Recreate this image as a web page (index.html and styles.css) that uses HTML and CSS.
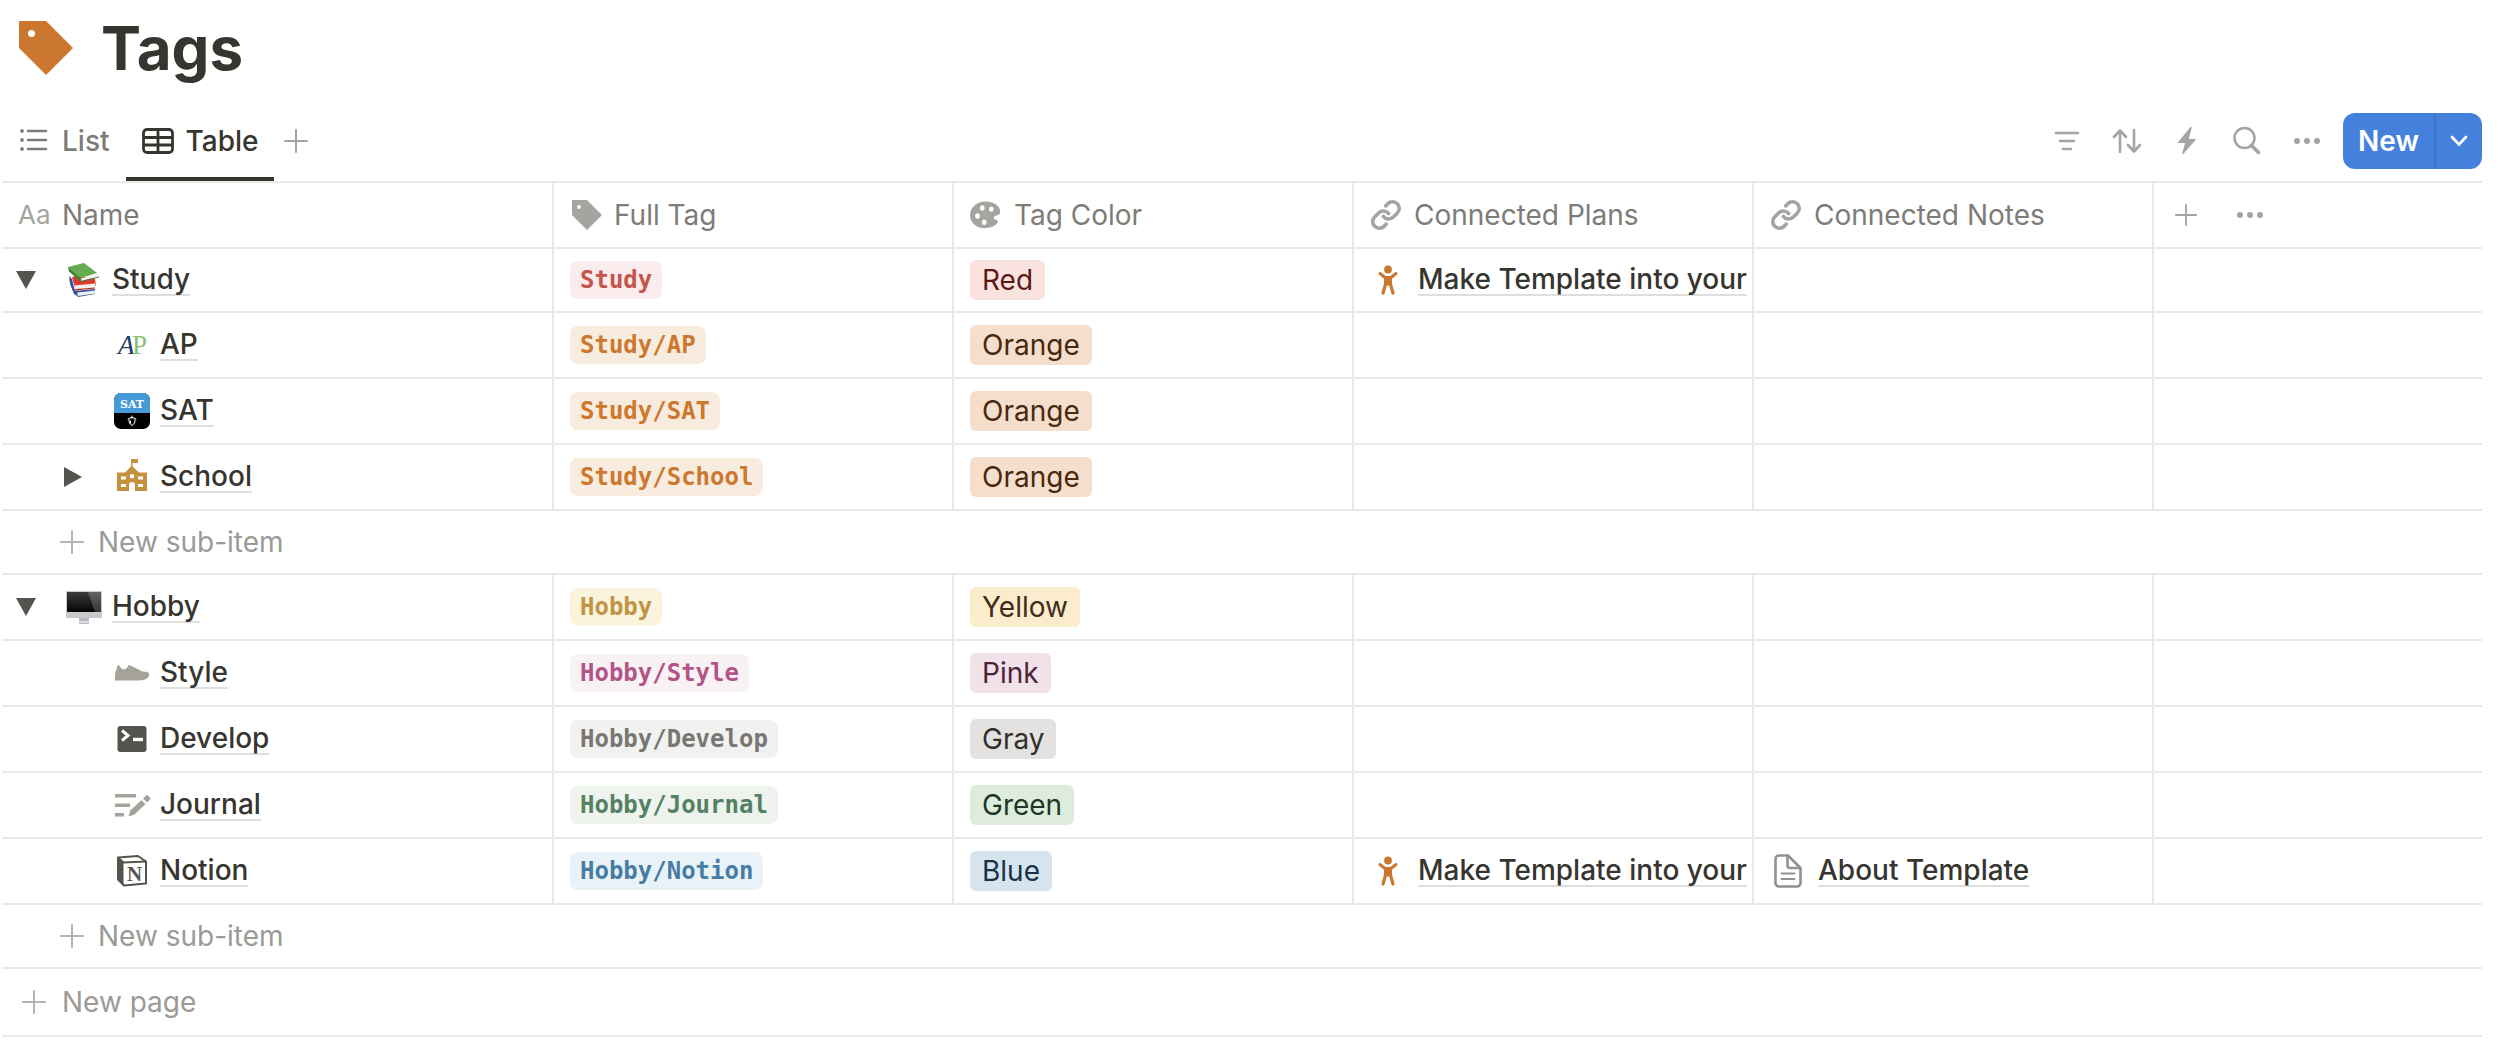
FILE: index.html
```html
<!DOCTYPE html>
<html lang="en">
<head>
  <meta charset="UTF-8" />
  <meta name="viewport" content="width=device-width, initial-scale=1" />
  <title>Tags</title>
  <link rel="stylesheet" href="styles.css">
</head>
<body>

<!-- Shared icons -->
<svg class="sprite" aria-hidden="true">
  <symbol id="i-tag" viewBox="0 0 54 54">
    <path fill-rule="evenodd" d="M0 0h27l27 27-27 27L0 27zM12.500 9a3.500 3.500 0 1 0 0 7 3.500 3.500 0 0 0 0-7z" />
  </symbol>
  <symbol id="i-plus" viewBox="0 0 24 24">
    <path d="M12 1v22M1 12h22" fill="none" stroke="currentColor" stroke-width="2" stroke-linecap="round" />
  </symbol>
  <symbol id="i-dots" viewBox="0 0 26 8">
    <circle cx="3" cy="4" r="3" /><circle cx="13" cy="4" r="3" /><circle cx="23" cy="4" r="3" />
  </symbol>
  <symbol id="i-link" viewBox="0 0 24 24">
    <g fill="none" stroke="currentColor" stroke-width="2.700" stroke-linecap="round" stroke-linejoin="round">
      <path d="M10 13a5 5 0 0 0 7.540.540l3-3a5 5 0 0 0-7.070-7.070l-1.720 1.710" />
      <path d="M14 11a5 5 0 0 0-7.540-.540l-3 3a5 5 0 0 0 7.070 7.070l1.710-1.710" />
    </g>
  </symbol>
  <symbol id="i-person" viewBox="0 0 20 30">
    <circle cx="10" cy="4.500" r="3.900" />
    <path d="M2 8.500l5 4h6l5-4" fill="none" stroke="currentColor" stroke-width="3" stroke-linecap="round" stroke-linejoin="round" />
    <path d="M6 11.500h8v9H6z" />
    <path d="M7.500 19L5 28M12.500 19l2.500 9" fill="none" stroke="currentColor" stroke-width="3.200" stroke-linecap="round" />
  </symbol>
  <symbol id="i-down" viewBox="0 0 20 18"><path d="M0 0h20L10 18z" /></symbol>
  <symbol id="i-right" viewBox="0 0 18 20"><path d="M0 0v20l18-10z" /></symbol>
</svg>

<main class="page">
  <header class="page-header">
    <svg class="page-icon"><use href="#i-tag" /></svg>
    <h1>Tags</h1>
  </header>

  <div class="view-bar">
    <div class="tabs">
      <button class="tab">
        <svg class="icon" viewBox="0 0 32 32">
          <path d="M10 6h18M10 15h18M10 24h18" fill="none" stroke="currentColor" stroke-width="2.600" stroke-linecap="round" />
          <circle cx="4" cy="6" r="1.900" /><circle cx="4" cy="15" r="1.900" /><circle cx="4" cy="24" r="1.900" />
        </svg>
        List
      </button>
      <button class="tab active">
        <svg class="icon" viewBox="0 0 32 32">
          <path d="M5 4.500h22a3.500 3.500 0 0 1 3.500 3.500v16a3.500 3.500 0 0 1-3.500 3.500H5A3.500 3.500 0 0 1 1.500 24V8A3.500 3.500 0 0 1 5 4.500zM1.500 12.500h29M1.500 20h29M16 5v22" fill="none" stroke="currentColor" stroke-width="2.800" />
        </svg>
        Table
      </button>
      <button class="add-view" aria-label="Add view"><svg class="plus"><use href="#i-plus" /></svg></button>
    </div>

    <div class="tools">
      <button class="tool" aria-label="Filter">
        <svg class="icon" viewBox="0 0 32 32">
          <path d="M5 8h22M9 16h14M12 24h8" fill="none" stroke="currentColor" stroke-width="2.600" stroke-linecap="round" />
        </svg>
      </button>
      <button class="tool" aria-label="Sort">
        <svg class="icon" viewBox="0 0 32 32">
          <path d="M9 27V6M3 12l6-6.500 6 6.500M23 5v21M17 20l6 6.500 6-6.500" fill="none" stroke="currentColor" stroke-width="2.600" stroke-linecap="round" stroke-linejoin="round" />
        </svg>
      </button>
      <button class="tool" aria-label="Automations">
        <svg class="icon" viewBox="0 0 32 32">
          <path d="M19.500 2L7 17.200q-.500.800.500.800h6.500l-2.800 10.800q-.100 1.200.900.400L24.700 14.800q.600-.800-.400-.800h-6.500l2.900-11.300q0-1.500-1.200-.700z" />
        </svg>
      </button>
      <button class="tool" aria-label="Search">
        <svg class="icon" viewBox="0 0 32 32">
          <circle cx="13.500" cy="13" r="10" fill="none" stroke="currentColor" stroke-width="2.600" />
          <path d="M20.500 20.500l7 7" fill="none" stroke="currentColor" stroke-width="3.600" stroke-linecap="round" />
        </svg>
      </button>
      <button class="tool" aria-label="More"><svg class="dots"><use href="#i-dots" /></svg></button>
      <div class="new-group">
        <button class="new-btn">New</button>
        <button class="new-menu" aria-label="New from template">
          <svg class="chevron" viewBox="0 0 18 12">
            <path d="M2 2l7 7.500L16 2" fill="none" stroke="currentColor" stroke-width="2.600" stroke-linecap="round" />
          </svg>
        </button>
      </div>
    </div>
  </div>

  <table class="db">
    <colgroup>
      <col class="col-name">
      <col class="col-prop">
      <col class="col-prop">
      <col class="col-prop">
      <col class="col-prop">
      <col>
    </colgroup>
    <thead>
      <tr>
        <th><div class="head"><span class="aa">Aa</span>Name</div></th>
        <th><div class="head"><svg class="icon small"><use href="#i-tag" /></svg>Full Tag</div></th>
        <th>
          <div class="head">
            <svg class="icon" viewBox="0 0 32 32">
              <path fill-rule="evenodd" d="M15.500 2.500C7 2.500 0 8.500 0 16.200c0 7.300 6.300 13 14.500 13 5.500 0 9-1.500 12.300-4.400 1.700-1.600 1-3.600-.8-4-2.800-.600-3.200-3.600-.200-4.100 3-.400 4.400-1.300 4.400-4.200C30.200 7 24 2.500 15.500 2.500zM12.300 6.300a2.300 2.700 0 1 1 0 5.400 2.300 2.700 0 0 1 0-5.400zM21.300 7.400a2.300 2.700 0 1 1 0 5.400 2.300 2.700 0 0 1 0-5.400zM7.500 14.300a2.300 2.700 0 1 1 0 5.400 2.300 2.700 0 0 1 0-5.400zM14.200 20.500a2.300 2.700 0 1 1 0 5.400 2.300 2.700 0 0 1 0-5.400z" />
            </svg>
            Tag Color
          </div>
        </th>
        <th><div class="head"><svg class="icon"><use href="#i-link" /></svg>Connected Plans</div></th>
        <th><div class="head"><svg class="icon"><use href="#i-link" /></svg>Connected Notes</div></th>
        <th class="head-actions">
          <div class="head-buttons">
            <button aria-label="Add property"><svg class="plus"><use href="#i-plus" /></svg></button>
            <button aria-label="Property options"><svg class="dots"><use href="#i-dots" /></svg></button>
          </div>
        </th>
      </tr>
    </thead>

    <tbody>
      <tr class="first">
        <td>
          <div class="name">
            <button class="toggle" aria-label="Collapse Study"><svg class="arrow"><use href="#i-down" /></svg></button>
            <svg class="page-ico" viewBox="0 0 36 36">
              <path d="M3 14l3 3 3 12 2 5-3-2-4-10z" fill="#33529f" />
              <path d="M8 29l21-2v5l-17 3z" fill="#2d4a9c" />
              <path d="M11 30.500l18-2 1 3-18 2.500z" fill="#eceef2" />
              <path d="M6 15l4-1 19 3 1 7-21 2z" fill="#dc3a2c" />
              <path d="M8 23.500l21-2 1 4-20 2z" fill="#f3f1f1" />
              <path d="M8 27.300l21-1.700v1l-20 2z" fill="#b9281f" />
              <path d="M2 5L18 1l13 10-16 5z" fill="#67ab50" />
              <path d="M2 5l13 11v4L3 9.500z" fill="#3f7f36" />
              <path d="M15 16.500l17-4.500v2.500L15.500 19z" fill="#f4f4f2" />
              <path d="M15 19l18-4.500v1L15.500 20z" fill="#3f7f36" />
            </svg>
            <a href="#">Study</a>
          </div>
        </td>
        <td><code class="code red">Study</code></td>
        <td><span class="pill pill-red">Red</span></td>
        <td><div class="rel"><svg class="page-ico person"><use href="#i-person" /></svg><a href="#">Make Template into your</a></div></td>
        <td></td>
        <td></td>
      </tr>
      <tr>
        <td>
          <div class="name child">
            <span class="toggle"></span>
            <svg class="page-ico" viewBox="0 0 36 36">
              <text class="ap-a" x="4" y="27">A</text>
              <text class="ap-p" x="18" y="27">P</text>
            </svg>
            <a href="#">AP</a>
          </div>
        </td>
        <td><code class="code orange">Study/AP</code></td>
        <td><span class="pill pill-orange">Orange</span></td>
        <td></td>
        <td></td>
        <td></td>
      </tr>
      <tr>
        <td>
          <div class="name child">
            <span class="toggle"></span>
            <svg class="page-ico" viewBox="0 0 36 36">
              <rect width="36" height="36" rx="7" fill="#000" />
              <path d="M0 20V7a7 7 0 0 1 7-7h22a7 7 0 0 1 7 7v13z" fill="#459ad8" />
              <text class="sat" x="18" y="15">SAT</text>
              <path d="M14 26q4-3 8 0M15 26.500q-.500 4 3 6 3.500-2 3-6M18 25v-2M16.500 28v2" fill="none" stroke="#fff" stroke-width="1" stroke-linecap="round" />
            </svg>
            <a href="#">SAT</a>
          </div>
        </td>
        <td><code class="code orange">Study/SAT</code></td>
        <td><span class="pill pill-orange">Orange</span></td>
        <td></td>
        <td></td>
        <td></td>
      </tr>
      <tr>
        <td>
          <div class="name child">
            <button class="toggle" aria-label="Expand School"><svg class="arrow side"><use href="#i-right" /></svg></button>
            <svg class="page-ico ico-gold" viewBox="0 0 36 36">
              <path fill-rule="evenodd" d="M17 0h7v4h-5.500v3.500l6.500 6h8V32H21v-6a3 3 0 0 0-6 0v6H3V13.500h8l6-6zM18 15a2.300 2.300 0 1 0 0 4.600 2.300 2.300 0 0 0 0-4.600zM7 17.500v3h5v-3zM24 17.500v3h5v-3zM7 25v3h5v-3zM24 25v3h5v-3z" />
            </svg>
            <a href="#">School</a>
          </div>
        </td>
        <td><code class="code orange">Study/School</code></td>
        <td><span class="pill pill-orange">Orange</span></td>
        <td></td>
        <td></td>
        <td></td>
      </tr>
      <tr class="sub">
        <td colspan="6"><button class="add add-sub"><svg class="plus"><use href="#i-plus" /></svg>New sub-item</button></td>
      </tr>
    </tbody>

    <tbody>
      <tr>
        <td>
          <div class="name">
            <button class="toggle" aria-label="Collapse Hobby"><svg class="arrow"><use href="#i-down" /></svg></button>
            <svg class="page-ico" viewBox="0 0 36 36">
              <defs>
                <linearGradient id="screen" x1="0" y1="0" x2="0" y2="1">
                  <stop offset="0" stop-color="#3c3c3c" />
                  <stop offset="1" stop-color="#050505" />
                </linearGradient>
              </defs>
              <path d="M13 28h10v7H13z" fill="#b9b9be" />
              <path d="M13 32h10v2H13z" fill="#dcdce0" />
              <rect y="2" width="36" height="27" rx="1" fill="#c9c9ce" />
              <rect x="1" y="3" width="34" height="20" fill="url(#screen)" />
              <path d="M22 3h13v20h-6z" fill="#fff" opacity=".2" />
            </svg>
            <a href="#">Hobby</a>
          </div>
        </td>
        <td><code class="code yellow">Hobby</code></td>
        <td><span class="pill pill-yellow">Yellow</span></td>
        <td></td>
        <td></td>
        <td></td>
      </tr>
      <tr>
        <td>
          <div class="name child">
            <span class="toggle"></span>
            <svg class="page-ico ico-gray" viewBox="0 0 36 36">
              <path d="M3.500 10.500q1-1 2 .500 2 3.500 5 3.500 2.500-.500 3.500-3.500 1-1.500 2.500-.500 2.500 1.500 4 2l8 4 5 .500q1.500.500 1.500 2.500v1.500q-1 2.500-4 3.500-3 1-6 1H1q-.500-3 .500-8z" />
            </svg>
            <a href="#">Style</a>
          </div>
        </td>
        <td><code class="code pink">Hobby/Style</code></td>
        <td><span class="pill pill-pink">Pink</span></td>
        <td></td>
        <td></td>
        <td></td>
      </tr>
      <tr>
        <td>
          <div class="name child">
            <span class="toggle"></span>
            <svg class="page-ico" viewBox="0 0 36 36">
              <rect x="3.500" y="5" width="29" height="26" rx="3" fill="#55534e" />
              <path d="M8 9.500l6 5-6 5" fill="none" stroke="#fff" stroke-width="3" />
              <path d="M19 18.500h10" stroke="#fff" stroke-width="3.400" />
            </svg>
            <a href="#">Develop</a>
          </div>
        </td>
        <td><code class="code gray">Hobby/Develop</code></td>
        <td><span class="pill pill-gray">Gray</span></td>
        <td></td>
        <td></td>
        <td></td>
      </tr>
      <tr>
        <td>
          <div class="name child">
            <span class="toggle"></span>
            <svg class="page-ico ico-gray" viewBox="0 0 36 36">
              <path d="M1 7h21v3.400H1zM1 16.500h15v3.400H1zM1 26h9v3.400H1z" />
              <path d="M27.500 13l4 4-11 10.500-6 2 1.800-6zM29 11.500L33 7.700l4 4-4 3.800z" />
            </svg>
            <a href="#">Journal</a>
          </div>
        </td>
        <td><code class="code green">Hobby/Journal</code></td>
        <td><span class="pill pill-green">Green</span></td>
        <td></td>
        <td></td>
        <td></td>
      </tr>
      <tr>
        <td>
          <div class="name child">
            <span class="toggle"></span>
            <svg class="page-ico" viewBox="0 0 36 36">
              <path d="M4 4.500L24 3l8 5.500v22L10 32.500l-6-6z" fill="#fff" stroke="#55534e" stroke-width="2" stroke-linejoin="round" />
              <path d="M4 4.500l5.500 5V32L4 26.500z" fill="#55534e" />
              <path d="M4 4.500l5.500 5L32 8.500" fill="none" stroke="#55534e" stroke-width="2" />
              <text class="notion-n" x="20.500" y="28">N</text>
            </svg>
            <a href="#">Notion</a>
          </div>
        </td>
        <td><code class="code blue">Hobby/Notion</code></td>
        <td><span class="pill pill-blue">Blue</span></td>
        <td><div class="rel"><svg class="page-ico person"><use href="#i-person" /></svg><a href="#">Make Template into your</a></div></td>
        <td>
          <div class="rel">
            <svg class="page-ico ico-doc" viewBox="0 0 36 36">
              <path d="M9 2.500h9L30.500 15v15a3.500 3.500 0 0 1-3.500 3.500H9A3.500 3.500 0 0 1 5.500 30V6A3.500 3.500 0 0 1 9 2.500z" />
              <path d="M17.500 3v9.500q0 2.500 2.500 2.500h10" />
              <path d="M11.500 20.500h13M11.500 26h13" stroke-width="1.800" stroke-linecap="round" />
            </svg>
            <a href="#">About Template</a>
          </div>
        </td>
        <td></td>
      </tr>
      <tr class="sub">
        <td colspan="6"><button class="add add-sub"><svg class="plus"><use href="#i-plus" /></svg>New sub-item</button></td>
      </tr>
    </tbody>

    <tfoot>
      <tr>
        <td colspan="6"><button class="add"><svg class="plus"><use href="#i-plus" /></svg>New page</button></td>
      </tr>
    </tfoot>
  </table>
</main>

</body>
</html>
```

FILE: styles.css
```css
/* Reset and font */
* {
  box-sizing: border-box;
}
body {
  margin: 0;
  background: #fff;
  color: #37352f;
  font-family: Inter, "Liberation Sans", sans-serif;
  font-size: 28px;
  line-height: 34px;
}
button {
  display: flex;
  align-items: center;
  padding: 0;
  border: none;
  background: none;
  color: inherit;
  font: inherit;
  cursor: pointer;
}
svg {
  display: block;
  flex: none;
  fill: currentColor;
  overflow: visible;
}
.sprite {
  position: absolute;
  width: 0;
  height: 0;
}

.page {
  padding: 0 16px 0 2px;
}

/* Title */
.page-header {
  display: flex;
  align-items: center;
  gap: 28px;
  padding: 9px 17px 14px;
}
.page-icon {
  width: 54px;
  height: 54px;
  color: #cb772f;
}
h1 {
  margin: 0;
  font-size: 60px;
  line-height: 78px;
  font-weight: 700;
}

/* View tabs and toolbar */
.view-bar {
  display: flex;
  justify-content: space-between;
  height: 80px;
}
.tabs,
.tools {
  display: flex;
  align-items: center;
}
.icon {
  width: 32px;
  height: 32px;
}
.icon.small {
  width: 30px;
  height: 30px;
  margin-left: 2px;
}
.plus {
  width: 24px;
  height: 24px;
}
.dots {
  width: 26px;
  height: 8px;
}
.tab {
  gap: 12px;
  height: 80px;
  padding: 4px 16px 0;
  border-bottom: 4px solid transparent;
  font-weight: 500;
  color: #7d7c78;
}
.tab.active {
  border-bottom-color: #37352f;
  color: #37352f;
}
.add-view {
  padding: 0 10px;
  color: #a5a4a0;
}
.tool {
  justify-content: center;
  width: 60px;
  height: 56px;
  color: #a5a4a0;
}
.new-group {
  display: flex;
  height: 56px;
  margin-left: 6px;
  border-radius: 12px;
  overflow: hidden;
  background: #4381dc;
  color: #fff;
}
.new-btn {
  padding: 0 15px;
  border-right: 2px solid #4075c2;
  font-weight: 600;
}
.new-menu {
  justify-content: center;
  width: 46px;
}
.chevron {
  width: 18px;
  height: 12px;
}

/* Database table */
.db {
  width: 100%;
  table-layout: fixed;
  border-collapse: separate;
  border-spacing: 0;
}
.col-name {
  width: 552px;
}
.col-prop {
  width: 400px;
}
.db th,
.db td {
  height: 66px;
  padding: 0 16px;
  border-right: 2px solid #e9e9e7;
  border-bottom: 2px solid #e9e9e7;
  text-align: left;
  vertical-align: middle;
  white-space: nowrap;
}
.db th {
  height: 68px;
  border-top: 2px solid #e9e9e7;
  color: #7d7c78;
  font-weight: 400;
}
.db th:last-child,
.db td:last-child {
  border-right: none;
}
.db .first td,
.db .sub td {
  height: 64px;
}
.db tfoot td {
  height: 68px;
}

.head {
  display: flex;
  align-items: center;
  gap: 12px;
}
.head .icon,
.aa {
  color: #a5a4a0;
}
.aa {
  width: 32px;
  font-size: 26px;
}
.db .head-actions {
  padding: 0;
}
.head-buttons {
  display: flex;
  color: #a5a4a0;
}
.head-buttons button {
  justify-content: center;
  width: 64px;
  height: 64px;
}
.head-buttons .plus {
  width: 22px;
  height: 22px;
}

.name,
.rel {
  display: flex;
  align-items: center;
  gap: 12px;
}
.name {
  gap: 10px;
}
.name.child {
  padding-left: 48px;
}
.toggle {
  width: 38px;
}
.arrow {
  width: 20px;
  height: 18px;
  margin-left: -2px;
  color: #55534e;
}
.arrow.side {
  width: 18px;
  height: 20px;
}
.page-ico {
  width: 36px;
  height: 36px;
}
.person {
  height: 30px;
  color: #cb772f;
}
.ico-gold {
  color: #c4913f;
}
.ico-gray {
  color: #a5a299;
}
.ico-doc {
  fill: none;
  stroke: #91918e;
  stroke-width: 2.6;
  stroke-linejoin: round;
}
.name a,
.rel a {
  border-bottom: 2px solid #dededc;
  color: #37352f;
  font-weight: 500;
  line-height: 30px;
  text-decoration: none;
}

/* Text inside page icons */
.ap-a,
.ap-p {
  font-family: "Liberation Serif", serif;
  font-size: 27px;
}
.ap-a {
  fill: #1d3f68;
  font-style: italic;
}
.ap-p {
  fill: #86c06f;
}
.sat {
  fill: #fff;
  font: 700 11px "DejaVu Serif", serif;
  text-anchor: middle;
}
.notion-n {
  fill: #55534e;
  font: 700 21px "Liberation Serif", serif;
  text-anchor: middle;
}

/* Inline code tags */
.code {
  display: inline-block;
  padding: 0 10px;
  border-radius: 8px;
  font-family: "DejaVu Sans Mono", monospace;
  font-size: 24px;
  font-weight: 700;
  line-height: 38px;
  vertical-align: middle;
}
.red { color: #c4554d; background: #faecec; }
.orange { color: #cc782f; background: #f8ecdf; }
.yellow { color: #c29343; background: #faf3dd; }
.pink { color: #b35488; background: #f9f2f5; }
.gray { color: #787774; background: #f1f1ef; }
.green { color: #548164; background: #eef3ed; }
.blue { color: #487ca5; background: #e9f3f7; }

/* Select options */
.pill {
  display: inline-block;
  padding: 0 12px;
  border-radius: 6px;
  line-height: 40px;
  vertical-align: middle;
}
.pill-red { color: #5d1715; background: #fae3de; }
.pill-orange { color: #49290e; background: #f6decc; }
.pill-yellow { color: #402c1b; background: #faeccc; }
.pill-pink { color: #4c2337; background: #f1e1e9; }
.pill-gray { color: #32302c; background: #e3e2e0; }
.pill-green { color: #1c3829; background: #deecdc; }
.pill-blue { color: #183347; background: #d6e4ee; }

.add {
  gap: 16px;
  padding-left: 4px;
  color: #9b9a97;
}
.add .plus {
  color: #b5b4b2;
}
.add-sub {
  gap: 14px;
  padding-left: 42px;
}
```
